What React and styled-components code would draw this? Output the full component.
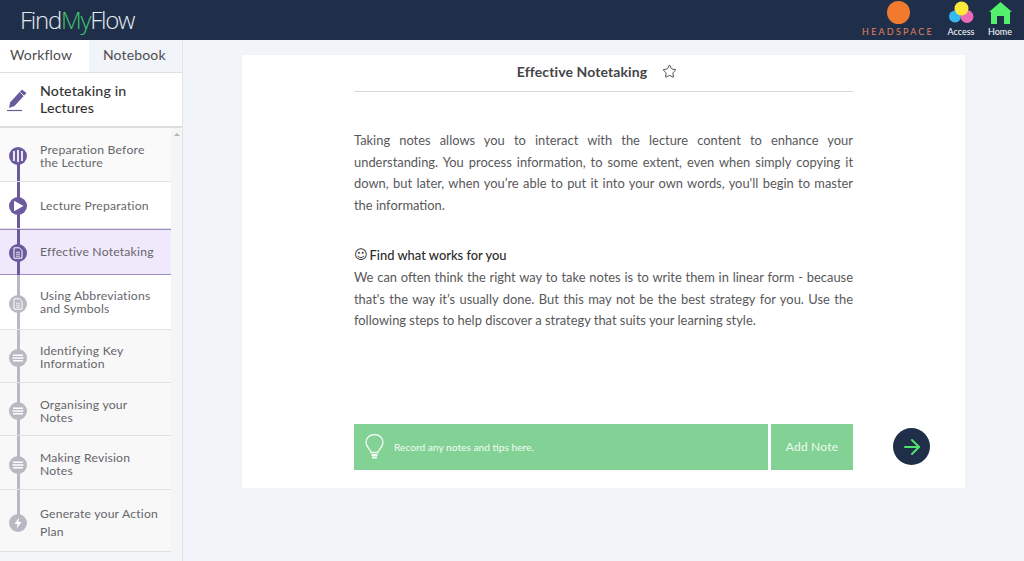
import React from 'react';
import styled, { createGlobalStyle } from 'styled-components';
import { Star, ArrowRight } from 'lucide-react';

const Global = createGlobalStyle`
  html, body { margin: 0; padding: 0; height: 100%; overflow: hidden; }
  body { font-family: "Lato", "Liberation Sans", sans-serif; background: #f1f4f8; }
  * { box-sizing: border-box; }
`;
const Page = styled.div`width: 1024px; height: 561px; display: flex; flex-direction: column; overflow: hidden;`;
const Header = styled.header`height: 40px; flex: none; background: #1f2f4a; display: flex; align-items: flex-start; padding: 0 5px 0 20px;`;
const Logo = styled.div`font-family: "Open Sans", sans-serif; font-weight: 300; font-size: 24px; line-height: 39px; letter-spacing: -1.25px; color: #e6ebf0; span { color: #3fc76a; }`;
const HeaderRight = styled.div`margin-left: auto; display: flex; align-items: flex-start;`;
const Headspace = styled.div`width: 72px; margin-right: 7px; display: flex; flex-direction: column; align-items: center; padding-top: 1px;`;
const Orange = styled.div`width: 23px; height: 23px; border-radius: 50%; background: #f27a2e;`;
const HeadspaceLabel = styled.div`font-size: 9px; letter-spacing: 2.2px; color: #e2805a; line-height: 11px; margin-top: 2px; white-space: nowrap;`;
const NavItem = styled.div`width: ${p => p.$w}px; display: flex; flex-direction: column; align-items: center; padding-top: 1px; font-size: 9px; line-height: 11px; color: #fff; svg { display: block; margin-bottom: 1px; }`;
const Body = styled.div`flex: 1; display: flex; min-height: 0;`;
const Sidebar = styled.aside`width: 183px; flex: none; background: #f4f5f6; border-right: 1px solid #e1e4e8; display: flex; flex-direction: column;`;
const Tabs = styled.div`display: flex; height: 33px; flex: none; border-bottom: 1px solid #dcdfe3;`;
const Tab = styled.div`flex: 0 0 ${p => p.$w}px; font-size: 14px; line-height: 30px; letter-spacing: .15px; padding-left: ${p => p.$pad}px; color: #4d4d4f; background: ${p => p.$active ? '#fff' : '#f1f4f8'};`;
const TitleRow = styled.div`height: 55px; flex: none; background: #fff; border-bottom: 2px solid #dcdde0; display: flex; align-items: center; padding-left: 6px; gap: 12px;`;
const TitleText = styled.div`font-size: 14.2px; line-height: 17px; font-weight: 500; color: #333; width: 110px; letter-spacing: .15px; padding-bottom: 2px;`;
const Steps = styled.div`display: flex; flex: 1; min-height: 0;`;
const List = styled.div`width: 171px; flex: none;`;
const Scroll = styled.div`flex: 1; background: #f4f5f6; display: flex; justify-content: center; padding-top: 5px;`;
const ScrollUp = styled.div`width: 0; height: 0; border-left: 3px solid transparent; border-right: 3px solid transparent; border-bottom: 3px solid #b5b5b5;`;
const Step = styled.div`
  position: relative; height: ${p => p.$h}px; display: flex; align-items: center; padding-left: 40px;
  background: ${p => p.$bg}; border-bottom: 1px solid ${p => p.$active ? '#9d8fc4' : '#e0e1e3'};
  ${p => p.$active ? 'border-top: 1px solid #9d8fc4;' : ''}
`;
const StepText = styled.div`font-size: 12.2px; line-height: ${p => p.$lh || 13}px; color: #66666a; letter-spacing: .2px; white-space: pre-line; position: relative; top: ${p => p.$top || 0}px;`;
const Line = styled.div`position: absolute; left: 17px; width: 3px; top: ${p => p.$top}px; bottom: ${p => p.$bottom}px; background: ${p => p.$color};`;
const Node = styled.div`position: absolute; left: 9px; top: 50%; margin-top: ${p => p.$off}px; width: 18px; height: 18px; border-radius: 50%; background: ${p => p.$color}; display: flex; align-items: center; justify-content: center;`;
const Main = styled.main`flex: 1; padding: 15px 0 0 59px; min-width: 0;`;
const Card = styled.section`width: 723px; height: 433px; background: #fff; padding: 0 112px; position: relative; display: flex; flex-direction: column;`;
const CardHead = styled.div`height: 37px; border-bottom: 1px solid #d6d6d6; display: flex; align-items: center; justify-content: center; gap: 15px; padding: 0 13px 3px 0;`;
const CardTitle = styled.h1`margin: 0; font-size: 14px; font-weight: 700; color: #444446; letter-spacing: .1px;`;
const Para = styled.p`margin: ${p => p.$mt}px 0 0; font-size: 12.9px; line-height: 21.7px; color: #58585a; text-align: justify; letter-spacing: 0;`;
const Tip = styled.div`margin-top: 27px; font-size: 12.9px; line-height: 22px; color: #2b2b2b; font-weight: 500; display: flex; align-items: center; gap: 2px;`;
const Smiley = styled.span`font-family: "DejaVu Sans", sans-serif; font-size: 13px;`;
const NoteRow = styled.div`margin-top: auto; margin-bottom: 18px; display: flex; height: 46px; gap: 3px;`;
const NoteInput = styled.div`flex: 1; background: #82d295; display: flex; align-items: center; padding-left: 11px; gap: 10px; color: #f2fbf4; font-size: 10.2px;`;
const NoteBtn = styled.button`width: 82px; border: 0; padding: 0 0 2px; background: #82d295; color: #eef9f0; font: 400 12px "Lato", sans-serif; letter-spacing: .2px;`;
const NextBtn = styled.button`position: absolute; left: 651px; top: 373px; width: 37px; height: 37px; border-radius: 50%; border: 0; padding: 0; background: #1f2f4a; display: flex; align-items: center; justify-content: center;`;

const Bars = () => (<svg width="12" height="12" viewBox="0 0 12 12"><path d="M1 3.2h10M.5 6h11M1 8.8h10" stroke="#fff" strokeWidth="1.5" /></svg>);
const Cols = () => (<svg width="12" height="14" viewBox="0 0 12 14"><path d="M2 2v10M6 1v12M10 2v10" stroke="#fff" strokeWidth="1.7" /></svg>);
const Play = () => (<svg width="12" height="12" viewBox="0 0 12 12"><path d="M2 .8 11.5 6 2 11.2z" fill="#fff" /></svg>);
const Doc = () => (<svg width="10" height="12" viewBox="0 0 10 12" fill="none" stroke="#fff" strokeWidth="1"><path d="M1 .8h5.2L9 3.4v7.8H1z" /><path d="M3 5.2h4M3 7.2h4M3 9.2h4" strokeWidth=".8" /></svg>);
const Bolt = () => (<svg width="10" height="12" viewBox="0 0 10 12"><path d="M6 .5 1.5 7h3L3.8 11.5 8.5 5h-3z" fill="#fff" /></svg>);
const PencilMark = () => (
  <svg width="22" height="24" viewBox="0 0 22 24">
    <path d="M16 1.5 20.5 5 8.5 18 3 20l1.2-5.8z" fill="#6b5b9e" />
    <path d="M14.5 4.5 18 8" stroke="#fff" strokeWidth="1" />
    <path d="M1 22.5h15" stroke="#6b5b9e" strokeWidth="1.2" />
  </svg>
);

const PURPLE = '#6b5b9e';
const GREY = '#b8b9c2';
const steps = [
  { t: 'Preparation Before\nthe Lecture', h: 54, bg: '#fafafa', c: PURPLE, i: <Cols />, o: -8, lt: 35, lb: 0, lc: PURPLE, tt: 1 },
  { t: 'Lecture Preparation', h: 47, bg: '#fff', c: PURPLE, i: <Play />, o: -8, lt: 0, lb: 0, lc: PURPLE, tt: 0 },
  { t: 'Effective Notetaking', h: 46, bg: '#f0e9fc', c: PURPLE, i: <Doc />, o: -8, lt: -1, lb: -1, lc: PURPLE, tt: -1 },
  { t: 'Using Abbreviations\nand Symbols', h: 55, bg: '#fff', c: GREY, i: <Doc />, o: -7, lt: 0, lb: 0, lc: GREY, tt: 0 },
  { t: 'Identifying Key\nInformation', h: 53, bg: '#f8f8f9', c: GREY, i: <Bars />, o: -7, lt: 0, lb: 0, lc: GREY, tt: 1 },
  { t: 'Organising your\nNotes', h: 53, bg: '#f8f8f9', c: GREY, i: <Bars />, o: -7, lt: 0, lb: 0, lc: GREY, tt: 2 },
  { t: 'Making Revision\nNotes', h: 54, bg: '#f8f8f9', c: GREY, i: <Bars />, o: -7, lt: 0, lb: 0, lc: GREY, tt: 1 },
  { t: 'Generate your Action\nPlan', h: 62, bg: '#f8f8f9', c: GREY, i: <Bolt />, o: -7, lt: 0, lb: 28, lc: GREY, lh: 18, tt: 2 },
];

export default function App() {
  return (
    <Page>
      <Global />
      <Header>
        <Logo>Find<span>My</span>Flow</Logo>
        <HeaderRight>
          <Headspace><Orange /><HeadspaceLabel>HEADSPACE</HeadspaceLabel></Headspace>
          <NavItem $w={40}>
            <svg width="25" height="24" viewBox="0 0 25 24"><circle cx="6" cy="15.5" r="6" fill="#35b8f0" /><circle cx="18" cy="15.5" r="6.5" fill="#ec6bb5" /><circle cx="12.5" cy="7.5" r="7" fill="#fde93a" /></svg>
            Access
          </NavItem>
          <NavItem $w={38}>
            <svg width="25" height="24" viewBox="0 0 25 24"><path d="M12.5 1 24 11h-2v12h-6v-8h-7v8H3V11H1z" fill="#52f06c" /></svg>
            Home
          </NavItem>
        </HeaderRight>
      </Header>
      <Body>
        <Sidebar>
          <Tabs>
            <Tab $w={89} $pad={10} $active>Workflow</Tab>
            <Tab $w={93} $pad={14}>Notebook</Tab>
          </Tabs>
          <TitleRow>
            <PencilMark />
            <TitleText>Notetaking in Lectures</TitleText>
          </TitleRow>
          <Steps>
            <List>
              {steps.map(s => (
                <Step key={s.t} $h={s.h} $bg={s.bg} $active={s.bg === '#f0e9fc'}>
                  <Line $top={s.lt} $bottom={s.lb} $color={s.lc} />
                  <Node $color={s.c} $off={s.o}>{s.i}</Node>
                  <StepText $lh={s.lh} $top={s.tt}>{s.t}</StepText>
                </Step>
              ))}
            </List>
            <Scroll><ScrollUp /></Scroll>
          </Steps>
        </Sidebar>
        <Main>
          <Card>
            <CardHead>
              <CardTitle>Effective Notetaking</CardTitle>
              <Star size={15} color="#333" strokeWidth={1.4} />
            </CardHead>
            <Para $mt={38}>Taking notes allows you to interact with the lecture content to enhance your understanding. You process information, to some extent, even when simply copying it down, but later, when you’re able to put it into your own words, you'll begin to master the information.</Para>
            <Tip><Smiley>☺</Smiley> Find what works for you</Tip>
            <Para $mt={1}>We can often think the right way to take notes is to write them in linear form - because that's the way it’s usually done. But this may not be the best strategy for you. Use the following steps to help discover a strategy that suits your learning style.</Para>
            <NoteRow>
              <NoteInput>
                <svg width="19" height="26" viewBox="0 0 19 26" fill="none" stroke="#f2fbf4" strokeWidth="1.3"><path d="M6 18.5c0-3-5-5-5-10a8.5 8 0 0 1 17 0c0 5-5 7-5 10z" /><path d="M6.5 21h6M7 23.5h5" strokeWidth="1.8" /></svg>
                Record any notes and tips here.
              </NoteInput>
              <NoteBtn>Add Note</NoteBtn>
            </NoteRow>
            <NextBtn><ArrowRight size={24} color="#52e06c" strokeWidth={2} /></NextBtn>
          </Card>
        </Main>
      </Body>
    </Page>
  );
}
